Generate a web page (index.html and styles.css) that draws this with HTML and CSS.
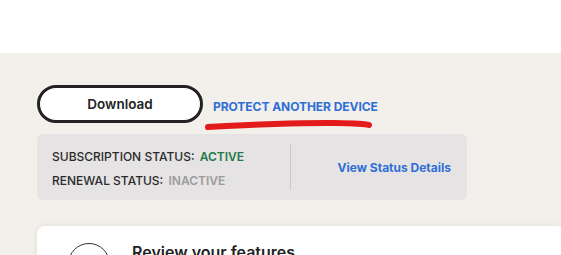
FILE: index.html
```html
<!DOCTYPE html>
<html>
<head>
<meta charset="utf-8">
<link rel="stylesheet" href="styles.css">
</head>
<body>
<div class="top"></div>
<main class="main">
  <div class="actions">
    <button class="download">Download</button>
    <div class="protect-wrap">
      <a class="protect">PROTECT ANOTHER DEVICE</a>
      <svg class="scribble" width="170" height="14" viewBox="0 0 170 14">
        <path d="M3 9 C 40 7, 90 4.5, 130 5 C 150 5.3, 160 5.6, 164 7" stroke="#e31b1b" stroke-width="6" fill="none" stroke-linecap="round"/>
      </svg>
    </div>
  </div>
  <div class="status">
    <div class="status-left">
      <div class="line">SUBSCRIPTION STATUS: <span class="active">ACTIVE</span></div>
      <div class="line">RENEWAL STATUS: <span class="inactive">INACTIVE</span></div>
    </div>
    <div class="divider"></div>
    <div class="status-right"><a class="details">View Status Details</a></div>
  </div>
  <div class="card">
    <div class="circle"></div>
    <div class="card-title">Review your features</div>
  </div>
</main>
</body>
</html>
```
FILE: styles.css
```css
html, body {
  margin: 0;
  padding: 0;
  overflow: hidden;
  height: 255px;
}
body {
  font-family: Inter, "Liberation Sans", sans-serif;
  background: #f3f0eb;
  color: #2a2a2a;
}
.top {
  height: 53px;
  background: #ffffff;
}
.main {
  padding: 32px 0 0 37px;
}
.actions {
  display: flex;
  align-items: center;
  gap: 10px;
  height: 38px;
}
.download {
  box-sizing: border-box;
  width: 166px;
  height: 38px;
  border: 3px solid #222222;
  border-radius: 19px;
  background: #ffffff;
  font-family: Inter, "Liberation Sans", sans-serif;
  font-size: 13.5px;
  font-weight: 600;
  color: #222222;
  padding: 0;
  margin: 0;
}
.protect-wrap {
  position: relative;
  padding-top: 1px;
}
.protect {
  font-size: 12px;
  font-weight: 700;
  color: #2e6ed6;
  letter-spacing: -0.05px;
}
.scribble {
  position: absolute;
  left: -8px;
  top: 24px;
}
.status {
  margin-top: 11px;
  width: 430px;
  height: 66px;
  box-sizing: border-box;
  background: #e5e3e3;
  border-radius: 6px;
  display: flex;
  align-items: stretch;
}
.status-left {
  width: 253px;
  box-sizing: border-box;
  padding: 11px 0 0 15px;
  font-size: 12px;
  font-weight: 500;
  color: #2b2b2b;
}
.line {
  line-height: 24px;
}
.active {
  color: #1e7a4b;
  font-weight: 600;
  margin-left: 2px;
}
.inactive {
  color: #9b9b9b;
  font-weight: 600;
  margin-left: 2px;
}
.divider {
  width: 1px;
  background: #c9c7c7;
  margin: 10px 0;
}
.status-right {
  flex: 1;
  display: flex;
  align-items: center;
  justify-content: flex-end;
  padding-right: 16px;
}
.details {
  font-size: 12px;
  font-weight: 700;
  color: #2e6ed6;
}
.card {
  margin-top: 26px;
  background: #ffffff;
  border-radius: 8px 0 0 0;
  box-shadow: 0 0 6px rgba(0,0,0,0.08);
  height: 29px;
  overflow: hidden;
  display: flex;
  align-items: flex-start;
  padding: 17px 0 0 31px;
  gap: 22px;
}
.circle {
  width: 40px;
  height: 40px;
  border: 1.5px solid #333333;
  border-radius: 50%;
  flex: none;
}
.card-title {
  font-size: 16px;
  font-weight: 600;
  color: #222222;
  line-height: 19px;
}
```
